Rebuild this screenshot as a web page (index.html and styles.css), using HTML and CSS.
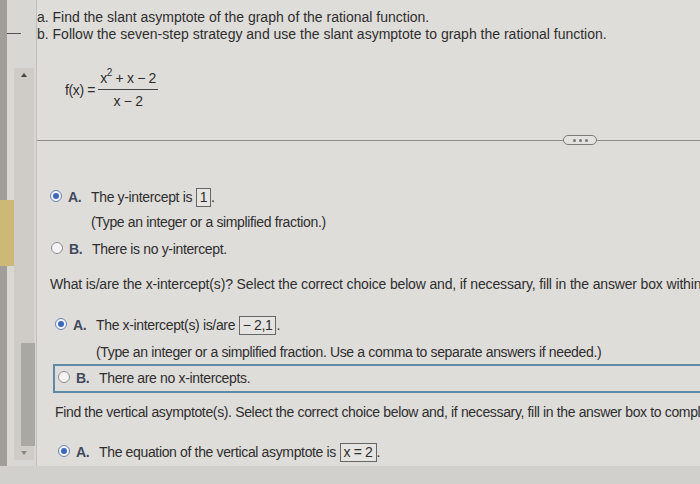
FILE: index.html
```html
<!DOCTYPE html>
<html>
<head>
<meta charset="utf-8">
<link rel="stylesheet" href="styles.css">
</head>
<body>
<div class="app">
  <div class="side">
    <div class="side-dark"></div>
    <div class="side-mid">
      <div class="plus"></div>
      <div class="track">
        <div class="arrow up"></div>
        <div class="track-fill"></div>
        <div class="thumb"></div>
        <div class="arrow down"></div>
      </div>
    </div>
    <div class="yellow"></div>
  </div>
  <div class="main">
    <div class="intro">
      <p class="l1">a. Find the slant asymptote of the graph of the rational function.</p>
      <p class="l2">b. Follow the seven-step strategy and use the slant asymptote to graph the rational function.</p>
    </div>
    <div class="func">
      <span class="fx">f(x) =</span>
      <span class="frac">
        <span class="num">x<sup>2</sup> + x − 2</span>
        <span class="den">x − 2</span>
      </span>
    </div>
    <div class="divider">
      <span class="pill"><i></i><i></i><i></i></span>
    </div>

    <div class="opt o1">
      <span class="radio on"></span><span class="let">A.</span>
      <div class="body">
        <div>The y-intercept is <span class="box">1</span>.</div>
        <div class="hint">(Type an integer or a simplified fraction.)</div>
      </div>
    </div>
    <div class="opt o2">
      <span class="radio"></span><span class="let">B.</span>
      <div class="body">There is no y-intercept.</div>
    </div>

    <p class="q q2">What is/are the x-intercept(s)? Select the correct choice below and, if necessary, fill in the answer box within your choice.</p>

    <div class="opt o3">
      <span class="radio on"></span><span class="let">A.</span>
      <div class="body">
        <div>The x-intercept(s) is/are <span class="box">− 2,1</span>.</div>
        <div class="hint">(Type an integer or a simplified fraction. Use a comma to separate answers if needed.)</div>
      </div>
    </div>
    <div class="focus">
      <div class="opt o4">
        <span class="radio"></span><span class="let">B.</span>
        <div class="body">There are no x-intercepts.</div>
      </div>
    </div>

    <p class="q q3">Find the vertical asymptote(s). Select the correct choice below and, if necessary, fill in the answer box to complete your choice.</p>

    <div class="opt o5">
      <span class="radio on"></span><span class="let">A.</span>
      <div class="body">The equation of the vertical asymptote is <span class="box">x = 2</span>.</div>
    </div>
  </div>
</div>
<div class="bottom"></div>
</body>
</html>
```
FILE: styles.css
```css
html, body {
  margin: 0;
  padding: 0;
}
body {
  width: 700px;
  height: 484px;
  overflow: hidden;
  background: #dfddda;
  font-family: "Liberation Sans", Arial, sans-serif;
  font-size: 14px;
  color: #2e2e2e;
  letter-spacing: -0.35px;
}
p { margin: 0; }
.app {
  display: flex;
  height: 466px;
}
.side {
  width: 37px;
  flex: none;
  display: flex;
  position: relative;
}
.side-dark {
  width: 7px;
  background: #a19e99;
}
.side-mid {
  width: 30px;
  display: flex;
  flex-direction: column;
  background: #d9d7d3;
  border-right: 1px solid #c2c0bc;
}
.plus {
  height: 68px;
  position: relative;
}
.plus::before {
  content: "";
  position: absolute;
  left: 0;
  top: 33px;
  width: 14px;
  height: 1px;
  background: #555;
}
.track {
  margin-left: 7px;
  width: 20px;
  height: 392px;
  background: #cfccc7;
  display: flex;
  flex-direction: column;
  align-items: center;
}
.track-fill { flex: 1; }
.arrow {
  width: 0;
  height: 0;
  border-left: 3px solid transparent;
  border-right: 3px solid transparent;
  margin: 5px 0;
}
.arrow.up { border-bottom: 4px solid #444; }
.arrow.down { border-top: 4px solid #888; }
.thumb {
  width: 14px;
  height: 103px;
  background: #aaa8a3;
  margin-left: 8px;
}
.yellow {
  position: absolute;
  left: 0;
  top: 200px;
  width: 14px;
  height: 66px;
  background: #cdb878;
}
.main {
  flex: 1;
  min-width: 0;
  overflow: hidden;
  white-space: nowrap;
}
.intro {
  padding-top: 9px;
  line-height: 17px;
  letter-spacing: 0;
}
.func {
  display: flex;
  align-items: center;
  margin: 27px 0 0 28px;
}
.fx { margin-right: 3px; }
.frac {
  display: inline-flex;
  flex-direction: column;
  align-items: center;
}
.num {
  padding: 0 2px 3px;
  border-bottom: 1px solid #444;
}
.num sup { font-size: 10px; vertical-align: 7px; line-height: 0; }
.den { padding-top: 3px; }
.divider {
  margin-top: 31px;
  height: 1px;
  background: #8f8d8a;
  position: relative;
}
.pill {
  position: absolute;
  left: 526px;
  top: -5px;
  width: 32px;
  height: 8px;
  border: 1.5px solid #7d7b78;
  border-radius: 6px;
  background: #e4e2df;
  display: flex;
  justify-content: center;
  align-items: center;
  gap: 3px;
}
.pill i {
  width: 3px;
  height: 3px;
  background: #777;
  border-radius: 50%;
}
.opt {
  display: flex;
  align-items: flex-start;
  line-height: 20px;
}
.radio {
  width: 10px;
  height: 10px;
  border: 1.5px solid #8d8e93;
  border-radius: 50%;
  background: #f3f3f3;
  margin-top: 3px;
  margin-right: 6px;
  flex: none;
  position: relative;
}
.radio.on {
  border-color: #6a82ae;
  background: #f1f3f8;
}
.radio.on::after {
  content: "";
  position: absolute;
  left: 2px;
  top: 2px;
  width: 6px;
  height: 6px;
  border-radius: 50%;
  background: #3e68b8;
}
.let {
  font-weight: bold;
  color: #3f4a5e;
  width: 23px;
  flex: none;
}
.hint { margin-top: 5px; }
.box {
  display: inline-block;
  border: 1px solid #666;
  padding: 0 3px;
  line-height: 17px;
  background: #e6e4e1;
}
.o1 { margin: 46px 0 0 13px; }
.o2 { margin: 7px 0 0 14px; }
.q2 { margin: 17px 0 0 13px; letter-spacing: -0.15px; }
.o3 { margin: 23px 0 0 18px; }
.o3 .hint { margin-top: 7px; }
.focus {
  margin: 2px 0 0 16px;
  border: 2px solid #5f8aa6;
  border-right: none;
  padding: 2px 0 3px 3px;
}
.o4 { margin: 0; }
.q3 { margin: 11px 0 0 18px; }
.o5 { margin: 22px 0 0 21px; }
.bottom {
  height: 18px;
  background: #d2d0cc;
}
```
